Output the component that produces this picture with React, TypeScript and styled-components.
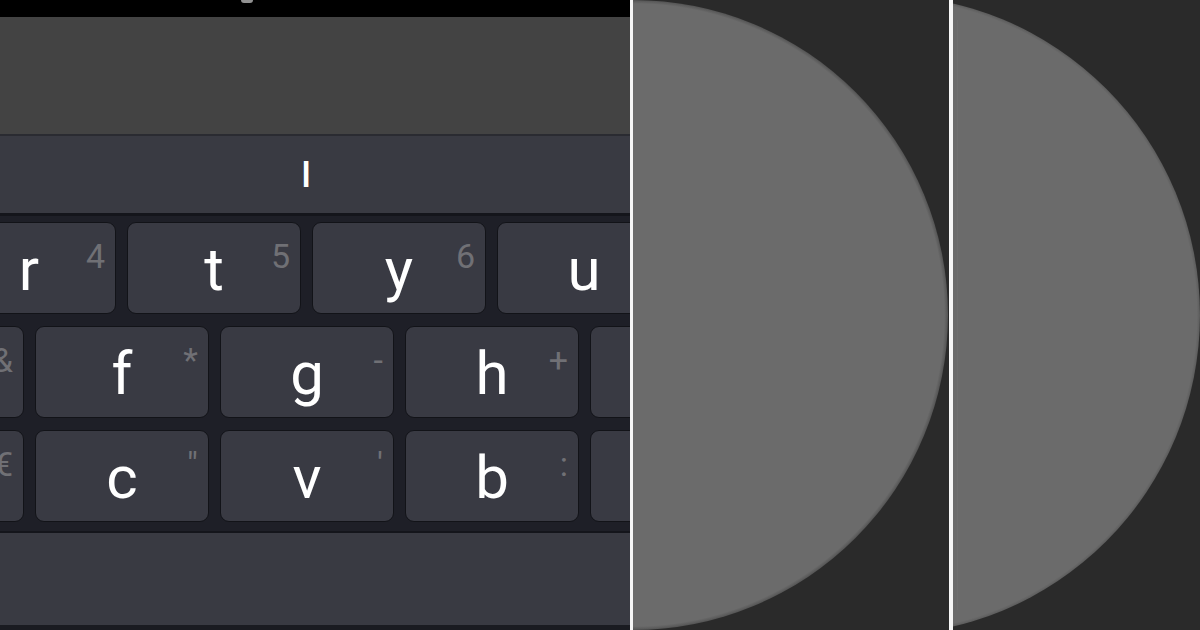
import styled, { createGlobalStyle } from "styled-components";

const GlobalStyle = createGlobalStyle`
  html, body {
    margin: 0;
    padding: 0;
    background: #f4f4f4;
    font-family: Roboto, "Noto Sans", sans-serif;
  }
`;

type KeyDef = { letter: string; hint: string };

const rows: { offset: number; keys: KeyDef[] }[] = [
  {
    offset: -58,
    keys: [
      { letter: "r", hint: "4" },
      { letter: "t", hint: "5" },
      { letter: "y", hint: "6" },
      { letter: "u", hint: "7" },
    ],
  },
  {
    offset: -150,
    keys: [
      { letter: "d", hint: "&" },
      { letter: "f", hint: "*" },
      { letter: "g", hint: "-" },
      { letter: "h", hint: "+" },
      { letter: "j", hint: "(" },
    ],
  },
  {
    offset: -150,
    keys: [
      { letter: "x", hint: "€" },
      { letter: "c", hint: '"' },
      { letter: "v", hint: "'" },
      { letter: "b", hint: ":" },
      { letter: "n", hint: ";" },
    ],
  },
];

export default function App() {
  return (
    <>
      <GlobalStyle />
      <Screen>
        <KeyboardPanel>
          <StatusBar>
            <StatusDot />
          </StatusBar>
          <Preview />
          <SuggestionBar>
            <Suggestion>I</Suggestion>
          </SuggestionBar>
          <KeyArea>
            {rows.map((row, i) => (
              <KeyRow key={i} $offset={row.offset}>
                {row.keys.map((k) => (
                  <Key key={k.letter}>
                    <Letter>{k.letter}</Letter>
                    <Hint>{k.hint}</Hint>
                  </Key>
                ))}
              </KeyRow>
            ))}
          </KeyArea>
          <BottomBar />
        </KeyboardPanel>

        <Divider $width={3} />

        <CirclePanel $width={316}>
          <svg width="316" height="630" viewBox="0 0 316 630">
            <defs>
              <radialGradient id="rimA" cx="0" cy="315" r="315" gradientUnits="userSpaceOnUse">
                <stop offset="0.988" stopColor="#6b6b6b" />
                <stop offset="1" stopColor="#545454" />
              </radialGradient>
            </defs>
            <circle cx="0" cy="315" r="315" fill="url(#rimA)" />
          </svg>
        </CirclePanel>

        <Divider $width={4} />

        <CirclePanel $width={247}>
          <svg width="247" height="630" viewBox="0 0 247 630">
            <defs>
              <radialGradient id="rimB" cx="-73" cy="315" r="320" gradientUnits="userSpaceOnUse">
                <stop offset="0.99" stopColor="#6b6b6b" />
                <stop offset="1" stopColor="#5c5c5c" />
              </radialGradient>
            </defs>
            <circle cx="-73" cy="315" r="320" fill="url(#rimB)" />
            <line x1="4.5" y1="20" x2="4.5" y2="610" stroke="#6f6f6f" strokeWidth="1" />
          </svg>
        </CirclePanel>
      </Screen>
    </>
  );
}

const Screen = styled.div`
  display: flex;
  width: 1200px;
  height: 630px;
  overflow: hidden;
`;

const KeyboardPanel = styled.div`
  flex: 0 0 630px;
  display: flex;
  flex-direction: column;
  background: #1e1f27;
  overflow: hidden;
`;

const StatusBar = styled.div`
  height: 17px;
  background: #000;
  padding-left: 241px;
`;

const StatusDot = styled.div`
  width: 12px;
  height: 3px;
  background: #cfcfcf;
  border-radius: 0 0 6px 6px;
  opacity: 0.7;
`;

const Preview = styled.div`
  height: 117px;
  background: #434343;
`;

const SuggestionBar = styled.div`
  height: 77px;
  border-top: 2px solid #2a2b31;
  background: #393a42;
  display: flex;
  align-items: center;
  justify-content: center;
  padding-right: 18px;
`;

const Suggestion = styled.span`
  color: #ffffff;
  font-family: Roboto, sans-serif;
  font-size: 36px;
  font-weight: 500;
  line-height: 1;
`;

const KeyArea = styled.div`
  border-top: 3px solid #14151b;
  padding: 6px 0 9px;
  display: flex;
  flex-direction: column;
  gap: 12px;
  background: #1e1f27;
  overflow: hidden;
`;

const KeyRow = styled.div<{ $offset: number }>`
  display: flex;
  gap: 11px;
  margin-left: ${(p) => p.$offset}px;
  height: 92px;
`;

const Key = styled.div`
  position: relative;
  flex: 0 0 174px;
  box-sizing: border-box;
  border: 1px solid #121318;
  border-radius: 9px;
  background: #393a43;
  display: flex;
  align-items: center;
  justify-content: center;
  padding-top: 3px;
`;

const Letter = styled.span`
  color: #ffffff;
  font-family: Roboto, sans-serif;
  font-size: 60px;
  line-height: 1;
`;

const Hint = styled.span`
  position: absolute;
  top: 16px;
  right: 10px;
  color: #707075;
  font-family: Roboto, sans-serif;
  font-size: 34px;
  line-height: 1;
`;

const BottomBar = styled.div`
  flex: 1;
  border-top: 2px solid #14151b;
  border-bottom: 5px solid #1a1b21;
  background: #393a42;
`;

const Divider = styled.div<{ $width: number }>`
  flex: 0 0 ${(p) => p.$width}px;
  background: #f6f6f6;
`;

const CirclePanel = styled.div<{ $width: number }>`
  flex: 0 0 ${(p) => p.$width}px;
  background: #2a2a2a;
  overflow: hidden;

  svg {
    display: block;
  }
`;
